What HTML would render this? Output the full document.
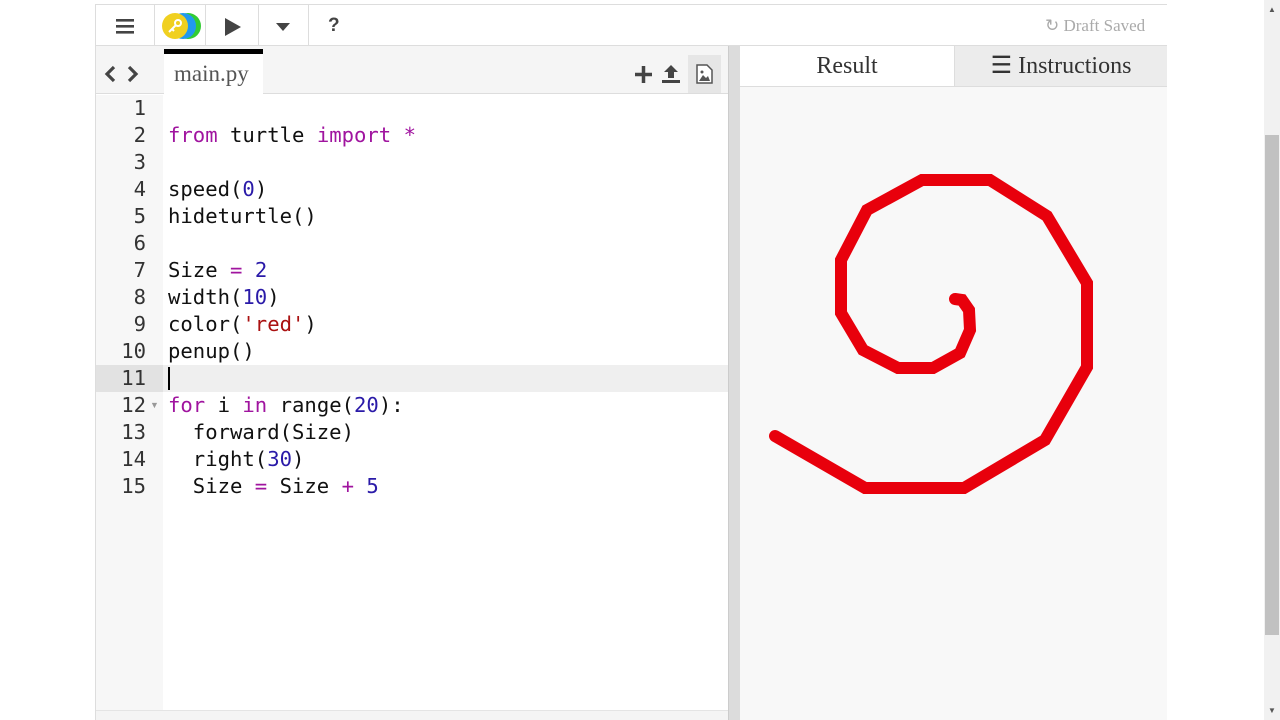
<!DOCTYPE html>
<html><head><meta charset="utf-8"><style>
*{margin:0;padding:0;box-sizing:border-box}
body{width:1280px;height:720px;background:#fff;position:relative;overflow:hidden;font-family:"Liberation Serif",serif}
.abs{position:absolute}
.code{font-family:"DejaVu Sans Mono","Liberation Mono",monospace;font-size:20.6px;line-height:27px}
.kw{color:#a0149f}.num{color:#2a1aa8}.str{color:#a11}
</style></head><body>
<div class="abs" style="left:95px;top:4px;width:1072px;height:1px;background:#ddd"></div>
<div class="abs" style="left:95px;top:4px;width:1px;height:716px;background:#ddd"></div>
<div class="abs" style="left:95px;top:45px;width:1072px;height:1px;background:#ddd"></div>
<!-- toolbar -->
<div class="abs" style="left:154px;top:5px;width:1px;height:40px;background:#ddd"></div>
<div class="abs" style="left:205px;top:5px;width:1px;height:40px;background:#ddd"></div>
<div class="abs" style="left:258px;top:5px;width:1px;height:40px;background:#ddd"></div>
<div class="abs" style="left:308px;top:5px;width:1px;height:40px;background:#ddd"></div>
<svg class="abs" style="left:116px;top:19px" width="18" height="15"><rect y="0" width="18" height="2.6" fill="#444"/><rect y="6" width="18" height="2.6" fill="#444"/><rect y="12" width="18" height="2.6" fill="#444"/></svg>
<svg class="abs" style="left:160px;top:11px" width="44" height="30"><circle cx="28" cy="15" r="13" fill="#3c3"/><circle cx="23" cy="15" r="13" fill="#29e"/><circle cx="15" cy="15" r="13" fill="#f0d020"/><path d="M9 21l7-7M12 18l2 2" stroke="#fff" stroke-width="2"/><circle cx="18" cy="12" r="3" fill="none" stroke="#fff" stroke-width="2"/></svg>
<svg class="abs" style="left:225px;top:18px" width="16" height="18"><path d="M0 0L16 9L0 18Z" fill="#444"/></svg>
<svg class="abs" style="left:276px;top:23px" width="14" height="8"><path d="M0 0H14L7 8Z" fill="#444"/></svg>
<div class="abs" style="left:328px;top:15px;font:bold 19px 'Liberation Sans',sans-serif;color:#444">?</div>
<div class="abs" style="left:1045px;top:16px;font-size:17px;color:#aaa">&#x21bb; Draft Saved</div>
<!-- editor tabs -->
<div class="abs" style="left:96px;top:46px;width:632px;height:48px;background:#f5f5f5;border-bottom:1px solid #ddd"></div>
<svg class="abs" style="left:102px;top:65px" width="38" height="18"><path d="M12 2L5 9L12 16M27 2L34 9L27 16" fill="none" stroke="#444" stroke-width="3.2"/></svg>
<div class="abs" style="left:164px;top:49px;width:99px;height:46px;background:#fff"></div>
<div class="abs" style="left:164px;top:49px;width:99px;height:5px;background:#000"></div>
<div class="abs" style="left:174px;top:61px;font-size:23px;color:#555">main.py</div>
<svg class="abs" style="left:635px;top:66px" width="17" height="17"><path d="M8.5 0V17M0 8.5H17" stroke="#444" stroke-width="3.5"/></svg>
<svg class="abs" style="left:661px;top:65px" width="20" height="19"><path d="M10 0L3 7H7V13H13V7H17Z" fill="#444"/><rect x="1" y="15" width="18" height="3" fill="#444"/></svg>
<div class="abs" style="left:688px;top:55px;width:33px;height:38px;background:#e6e6e6"></div>
<svg class="abs" style="left:696px;top:64px" width="17" height="20"><path d="M1 1H11L16 6V19H1Z" fill="#fff" stroke="#555" stroke-width="1.5"/><path d="M3 17L7 11L10 14L12 12L14 17Z" fill="#555"/><circle cx="6" cy="8" r="1.5" fill="#555"/></svg>
<!-- gutter -->
<div class="abs" style="left:96px;top:95px;width:67px;height:625px;background:#f7f7f7"></div>
<div class="abs" style="left:96px;top:365px;width:632px;height:27px;background:#efefef"></div>
<div class="abs" style="left:96px;top:365px;width:67px;height:27px;background:#e2e2e2"></div>
<div class="abs code" style="left:96px;top:95px;width:50px;text-align:right;color:#333">1<br>2<br>3<br>4<br>5<br>6<br>7<br>8<br>9<br>10<br>11<br>12<br>13<br>14<br>15</div>
<div class="abs" style="left:150px;top:400px;font-size:9px;color:#999">&#9660;</div>
<div class="abs" style="left:168px;top:367px;width:2px;height:23px;background:#000"></div>
<pre class="abs code" style="left:168px;top:95px;color:#111"> 
<span class="kw">from</span> turtle <span class="kw">import</span> <span class="kw">*</span>

speed(<span class="num">0</span>)
hideturtle()

Size <span class="kw">=</span> <span class="num">2</span>
width(<span class="num">10</span>)
color(<span class="str">'red'</span>)
penup()

<span class="kw">for</span> i <span class="kw">in</span> range(<span class="num">20</span>):
  forward(Size)
  right(<span class="num">30</span>)
  Size <span class="kw">=</span> Size <span class="kw">+</span> <span class="num">5</span></pre>
<div class="abs" style="left:96px;top:710px;width:632px;height:10px;background:#f4f4f4;border-top:1px solid #e4e4e4"></div>
<!-- divider -->
<div class="abs" style="left:728px;top:46px;width:12px;height:674px;background:#dcdcdc;border-left:1px solid #ccc"></div>
<!-- right -->
<div class="abs" style="left:740px;top:46px;width:427px;height:674px;background:#f8f8f8"></div>
<div class="abs" style="left:740px;top:46px;width:214px;height:41px;background:#fff;border-bottom:1px solid #ddd;text-align:center;font-size:24px;line-height:40px;color:#333">Result</div>
<div class="abs" style="left:954px;top:46px;width:213px;height:41px;background:#ececec;border-left:1px solid #ddd;border-bottom:1px solid #ddd;text-align:center;font-size:24px;line-height:40px;color:#333">&#9776; Instructions</div>
<svg class="abs" style="left:740px;top:88px" width="427" height="632"><polyline transform="translate(-740,-88)" points="775,436 865,488 964,488 1045,440 1087,367 1087,283 1047,216 990,180 922,180 867,210 841,260 841,313 863,350 898,368 933,368 960,353 970,330 969,310 962,300 955,299" fill="none" stroke="#e8000c" stroke-width="12" stroke-linejoin="miter" stroke-linecap="round"/></svg>
<!-- scrollbar -->
<div class="abs" style="left:1264px;top:0;width:16px;height:720px;background:#f1f1f1"></div>
<div class="abs" style="left:1265px;top:135px;width:14px;height:500px;background:#c1c1c1"></div>
<div class="abs" style="left:1268px;top:5px;font-size:8px;color:#555">&#9650;</div>
<div class="abs" style="left:1268px;top:706px;font-size:8px;color:#555">&#9660;</div>
</body></html>
